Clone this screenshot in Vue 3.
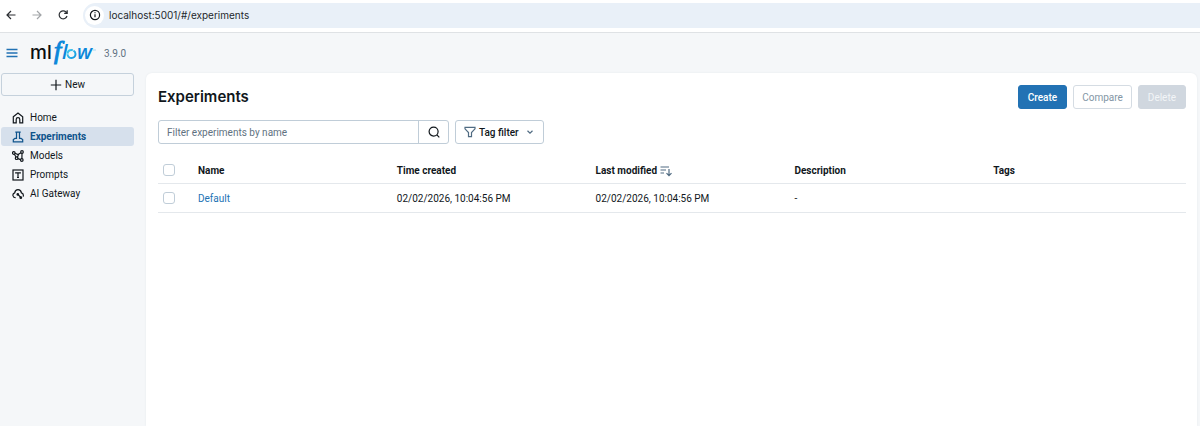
<script setup>
import { ref } from 'vue'

const query = ref('')
const nav = [
  { name: 'Home', icon: 'home' },
  { name: 'Experiments', icon: 'flask', active: true },
  { name: 'Models', icon: 'models' },
  { name: 'Prompts', icon: 'prompt' },
  { name: 'AI Gateway', icon: 'gateway' },
]
const rows = [
  { name: 'Default', created: '02/02/2026, 10:04:56 PM', modified: '02/02/2026, 10:04:56 PM', description: '-', tags: '' },
]
</script>

<template>
  <div class="window">
    <div class="browser">
      <button class="tool" aria-label="Back">
        <svg width="12" height="12" viewBox="0 0 12 12"><path d="M10.500 6H2M6 2 2 6l4 4" /></svg>
      </button>
      <button class="tool faded" aria-label="Forward">
        <svg width="12" height="12" viewBox="0 0 12 12"><path d="M1.500 6H10M6 2l4 4-4 4" /></svg>
      </button>
      <button class="tool" aria-label="Reload">
        <svg width="12" height="12" viewBox="0 0 12 12"><path d="M10 7a4 4 0 1 1-1-4l1 1M10.200 1.200V4.300H7.200" /></svg>
      </button>
      <div class="address">
        <span class="info">
          <svg width="12" height="12" viewBox="0 0 12 12"><circle cx="6" cy="6" r="4.600" /><path d="M6 5.300v3M6 3.300v1" /></svg>
        </span>
        <input type="text" value="localhost:5001/#/experiments" aria-label="Address" />
      </div>
    </div>

    <div class="app">
      <header class="top">
        <button class="menu" aria-label="Toggle menu">
          <svg width="12" height="12" viewBox="0 0 12 12"><path d="M.5 2.500h11M.5 6h11M.5 9.500h11" /></svg>
        </button>
        <a class="logo" href="#">
          <svg width="66" height="36" viewBox="0 0 66 36">
            <defs>
              <linearGradient id="ring" x1="0" y1="0" x2="1" y2="1">
                <stop offset="0" stop-color="#43c9ed" />
                <stop offset="1" stop-color="#1295e0" />
              </linearGradient>
            </defs>
            <text class="ml" x="-1" y="24">ml</text>
            <text class="f" x="23" y="24">f</text>
            <text class="low" x="31" y="24">l</text>
            <text class="low" x="46" y="24">w</text>
            <circle class="ring" cx="40.500" cy="19" r="4" stroke-dasharray="12 .7 7 .7 4 .733" />
            <path class="tm" d="M62 15h3" />
          </svg>
        </a>
        <span class="version">3.9.0</span>
      </header>

      <div class="body">
        <aside class="side">
          <button class="new">
            <svg width="12" height="12" viewBox="0 0 12 12"><path d="M6 .8v10.400M.8 6h10.400" /></svg>
            New
          </button>
          <nav>
            <a v-for="item in nav" :key="item.name" href="#" :class="{ active: item.active }">
              <svg width="12" height="12" viewBox="0 0 12 12">
                <path v-if="item.icon === 'home'" d="M1.300 4.800 6 1l4.700 3.800v6.100H7.800V7.500a1.800 1.800 0 0 0-3.600 0v3.400H1.300z" />
                <path v-else-if="item.icon === 'flask'" d="M3.300 1.200h5.400M4.500 1.200v6.200H3L1.300 8.600v2.200h9.400V8.600L9 7.400H7.500V1.200" />
                <g v-else-if="item.icon === 'models'">
                  <circle cx="1.800" cy="3" r="1.300" /><circle cx="10" cy="2" r="1.300" />
                  <circle cx="4.600" cy="8.200" r="1.300" /><circle cx="9.800" cy="10" r="1.300" />
                  <path d="M3 3.200 6 4.500l3-1.700M2.300 4.200l1.800 2.800M5.400 7.200 6.500 4.600M10 3.300l-.1 5.400M5.900 8.600l2.700 1" />
                </g>
                <g v-else-if="item.icon === 'prompt'">
                  <rect x="1" y="1" width="10" height="10" />
                  <path d="M3.700 4.600V3.900h4.600v.7M6 3.900v4.600M5 8.500h2" />
                </g>
                <g v-else>
                  <path d="M3.600 9.700H3.300a2.500 2.500 0 0 1-.6-4.900C3 2.700 4.300 1.600 6 1.600s3.100 1.100 3.400 3.200c1.300.3 2 1.200 2 2.400 0 .6-.2 1.200-.5 1.500M5.600 6.200l3.300 3.300" />
                  <circle class="dot" cx="5.800" cy="6.400" r="1.300" /><circle class="dot" cx="8.800" cy="9.700" r="1.400" />
                </g>
              </svg>
              {{ item.name }}
            </a>
          </nav>
        </aside>

        <main>
          <div class="heading">
            <h1>Experiments</h1>
            <div class="actions">
              <button class="btn primary">Create</button>
              <button class="btn outline" disabled>Compare</button>
              <button class="btn muted" disabled>Delete</button>
            </div>
          </div>

          <div class="filters">
            <div class="search">
              <input v-model="query" type="text" placeholder="Filter experiments by name" aria-label="Filter experiments by name" />
              <button aria-label="Search">
                <svg width="12" height="12" viewBox="0 0 12 12"><circle cx="5.600" cy="5.600" r="4.500" /><path d="m8.900 8.900 2.400 2.400" /></svg>
              </button>
            </div>
            <button class="tag-filter">
              <svg class="slate" width="12" height="12" viewBox="0 0 12 12"><path d="M1 1.300h10v1.500L7.500 6.600v4h-3v-4L1 2.800z" /></svg>
              Tag filter
              <svg class="slate chevron" width="8" height="8" viewBox="0 0 8 8"><path d="m1.500 2.800 2.500 2.400 2.500-2.400" /></svg>
            </button>
          </div>

          <table>
            <thead>
              <tr>
                <th class="pick"><input type="checkbox" aria-label="Select all experiments" /></th>
                <th>Name</th>
                <th>Time created</th>
                <th>
                  <span class="sorted">Last modified
                    <svg class="slate" width="12" height="12" viewBox="0 0 12 12"><path d="M.5 2h8.500M.5 5h5.500M.5 8h3.500M9 4v6.500M6.500 8.200 9 10.700l2.500-2.500" /></svg>
                  </span>
                </th>
                <th>Description</th>
                <th>Tags</th>
              </tr>
            </thead>
            <tbody>
              <tr v-for="row in rows" :key="row.name">
                <td class="pick"><input type="checkbox" :aria-label="'Select ' + row.name" /></td>
                <td><a href="#">{{ row.name }}</a></td>
                <td>{{ row.created }}</td>
                <td>{{ row.modified }}</td>
                <td>{{ row.description }}</td>
                <td>{{ row.tags }}</td>
              </tr>
            </tbody>
          </table>
        </main>
      </div>
    </div>
  </div>
</template>

<style>
html,
body,
#app {
  height: 100%;
}
</style>

<style scoped>
* {
  box-sizing: border-box;
}
.window {
  display: flex;
  flex-direction: column;
  min-height: 100%;
  background: #f5f7f9;
  color: #11171c;
  font: 10px/15px Roboto, "Liberation Sans", sans-serif;
}
button,
input {
  font: inherit;
  color: inherit;
  margin: 0;
}
button {
  display: inline-flex;
  align-items: center;
  justify-content: center;
  padding: 0;
  border: 0;
  background: none;
  white-space: nowrap;
}
a {
  color: #2272b4;
  text-decoration: none;
}
svg {
  display: block;
  flex: none;
  fill: none;
  stroke: currentColor;
  stroke-width: 1.2;
}
.browser {
  display: flex;
  align-items: center;
  height: 33px;
  padding: 0 0 2px 5px;
  border-bottom: 1px solid #dfe2e5;
  background: #fff;
  font-family: Inter, "Liberation Sans", sans-serif;
}
.tool {
  width: 12px;
  margin-right: 14px;
  color: #2a2d31;
}
.tool.faded {
  color: #a2a5a8;
}
.address {
  display: flex;
  flex: 1;
  align-items: center;
  gap: 5px;
  height: 25px;
  padding-left: 2px;
  border-radius: 13px 0 0 13px;
  background: #e9f0f8;
}
.info {
  display: grid;
  place-items: center;
  width: 19px;
  height: 19px;
  border-radius: 50%;
  background: #fff;
}
.address input {
  flex: 1;
  padding: 0;
  border: 0;
  outline: 0;
  background: none;
  color: #24282c;
}
.app {
  display: flex;
  flex: 1;
  flex-direction: column;
}
.top {
  display: flex;
  align-items: center;
  height: 40px;
  padding-left: 6px;
}
.menu {
  color: #2272b4;
  margin-right: 13px;
}
.menu svg {
  stroke-width: 1.5;
}
.logo svg {
  overflow: visible;
}
.logo text {
  stroke: none;
}
.logo .ml {
  fill: #0a0c0f;
  font: 500 19px Inter, sans-serif;
}
.logo .f,
.logo .low {
  fill: #0b87da;
  font: italic 600 20px "Open Sans", sans-serif;
}
.logo .f {
  stroke: #0b87da;
  stroke-width: 1;
  font: italic 400 26px "Liberation Serif", serif;
}
.ring {
  stroke: url(#ring);
  stroke-width: 2;
}
.tm {
  stroke: #a9d5ef;
  stroke-width: 1;
}
.version {
  margin-left: 7px;
  color: #5f7281;
}
.body {
  display: flex;
  flex: 1;
}
.side {
  width: 134px;
  padding-left: 1px;
}
.new {
  width: 100%;
  height: 23px;
  gap: 3px;
  border: 1px solid #c5d1dc;
  border-radius: 3px;
}
nav {
  display: flex;
  flex-direction: column;
  margin-top: 12px;
}
nav a {
  display: flex;
  align-items: center;
  gap: 6px;
  height: 19px;
  padding-left: 11px;
  border-radius: 3px;
  color: #11171c;
}
nav a.active {
  background: #d6e0ec;
  color: #0e538b;
  font-weight: 700;
}
.dot {
  fill: currentColor;
  stroke: none;
}
main {
  flex: 1;
  margin: 0 3px 0 12px;
  padding: 12px 11px 12px 12px;
  border-radius: 6px 6px 0 0;
  background: #fff;
  box-shadow: 0 0 2px #e4e8ec;
}
.heading {
  display: flex;
  align-items: center;
  justify-content: space-between;
}
h1 {
  margin: 0;
  font: 600 15px/24px Inter, "Liberation Sans", sans-serif;
}
.actions {
  display: flex;
  gap: 6px;
}
.btn {
  height: 24px;
  padding: 0 9px;
  border: 1px solid #d5dce3;
  border-radius: 3px;
}
.btn.outline {
  padding: 0 8px;
  color: #8396a5;
}
.btn.primary {
  border-color: #2272b4;
  background: #2272b4;
  color: #fff;
  font-weight: 500;
}
.btn.muted {
  border-color: #d0d7df;
  background: #d0d7df;
  color: #f2f5f7;
}
.filters {
  display: flex;
  gap: 6px;
  margin-top: 11px;
}
.search {
  display: flex;
  width: 291px;
  height: 24px;
  border: 1px solid #c0cdd8;
  border-radius: 3px;
}
.search input {
  flex: 1;
  min-width: 0;
  padding: 0 8px;
  border: 0;
  outline: 0;
  background: none;
}
.search input::placeholder {
  color: #5f7281;
  opacity: 1;
}
.search button {
  width: 30px;
  border-left: 1px solid #c0cdd8;
}
.tag-filter {
  height: 24px;
  gap: 3px;
  padding: 0 9px 0 8px;
  border: 1px solid #c0cdd8;
  border-radius: 3px;
  font-weight: 500;
}
.slate {
  color: #506b82;
}
.chevron {
  margin-left: 4px;
}
table {
  width: 100%;
  margin-top: 14px;
  border-collapse: collapse;
  table-layout: fixed;
}
th,
td {
  height: 29px;
  padding: 1px 6px 0;
  border-bottom: 1px solid #e4e8ec;
  text-align: left;
  vertical-align: middle;
}
th {
  height: 25px;
  font-weight: 700;
}
.pick {
  width: 34px;
  padding: 0 5px;
}
.pick input {
  display: block;
  width: 12px;
  height: 12px;
  appearance: none;
  border: 1px solid #c0cdd8;
  border-radius: 3px;
  background: #fff;
}
.sorted {
  display: flex;
  align-items: center;
  gap: 3px;
}
</style>
